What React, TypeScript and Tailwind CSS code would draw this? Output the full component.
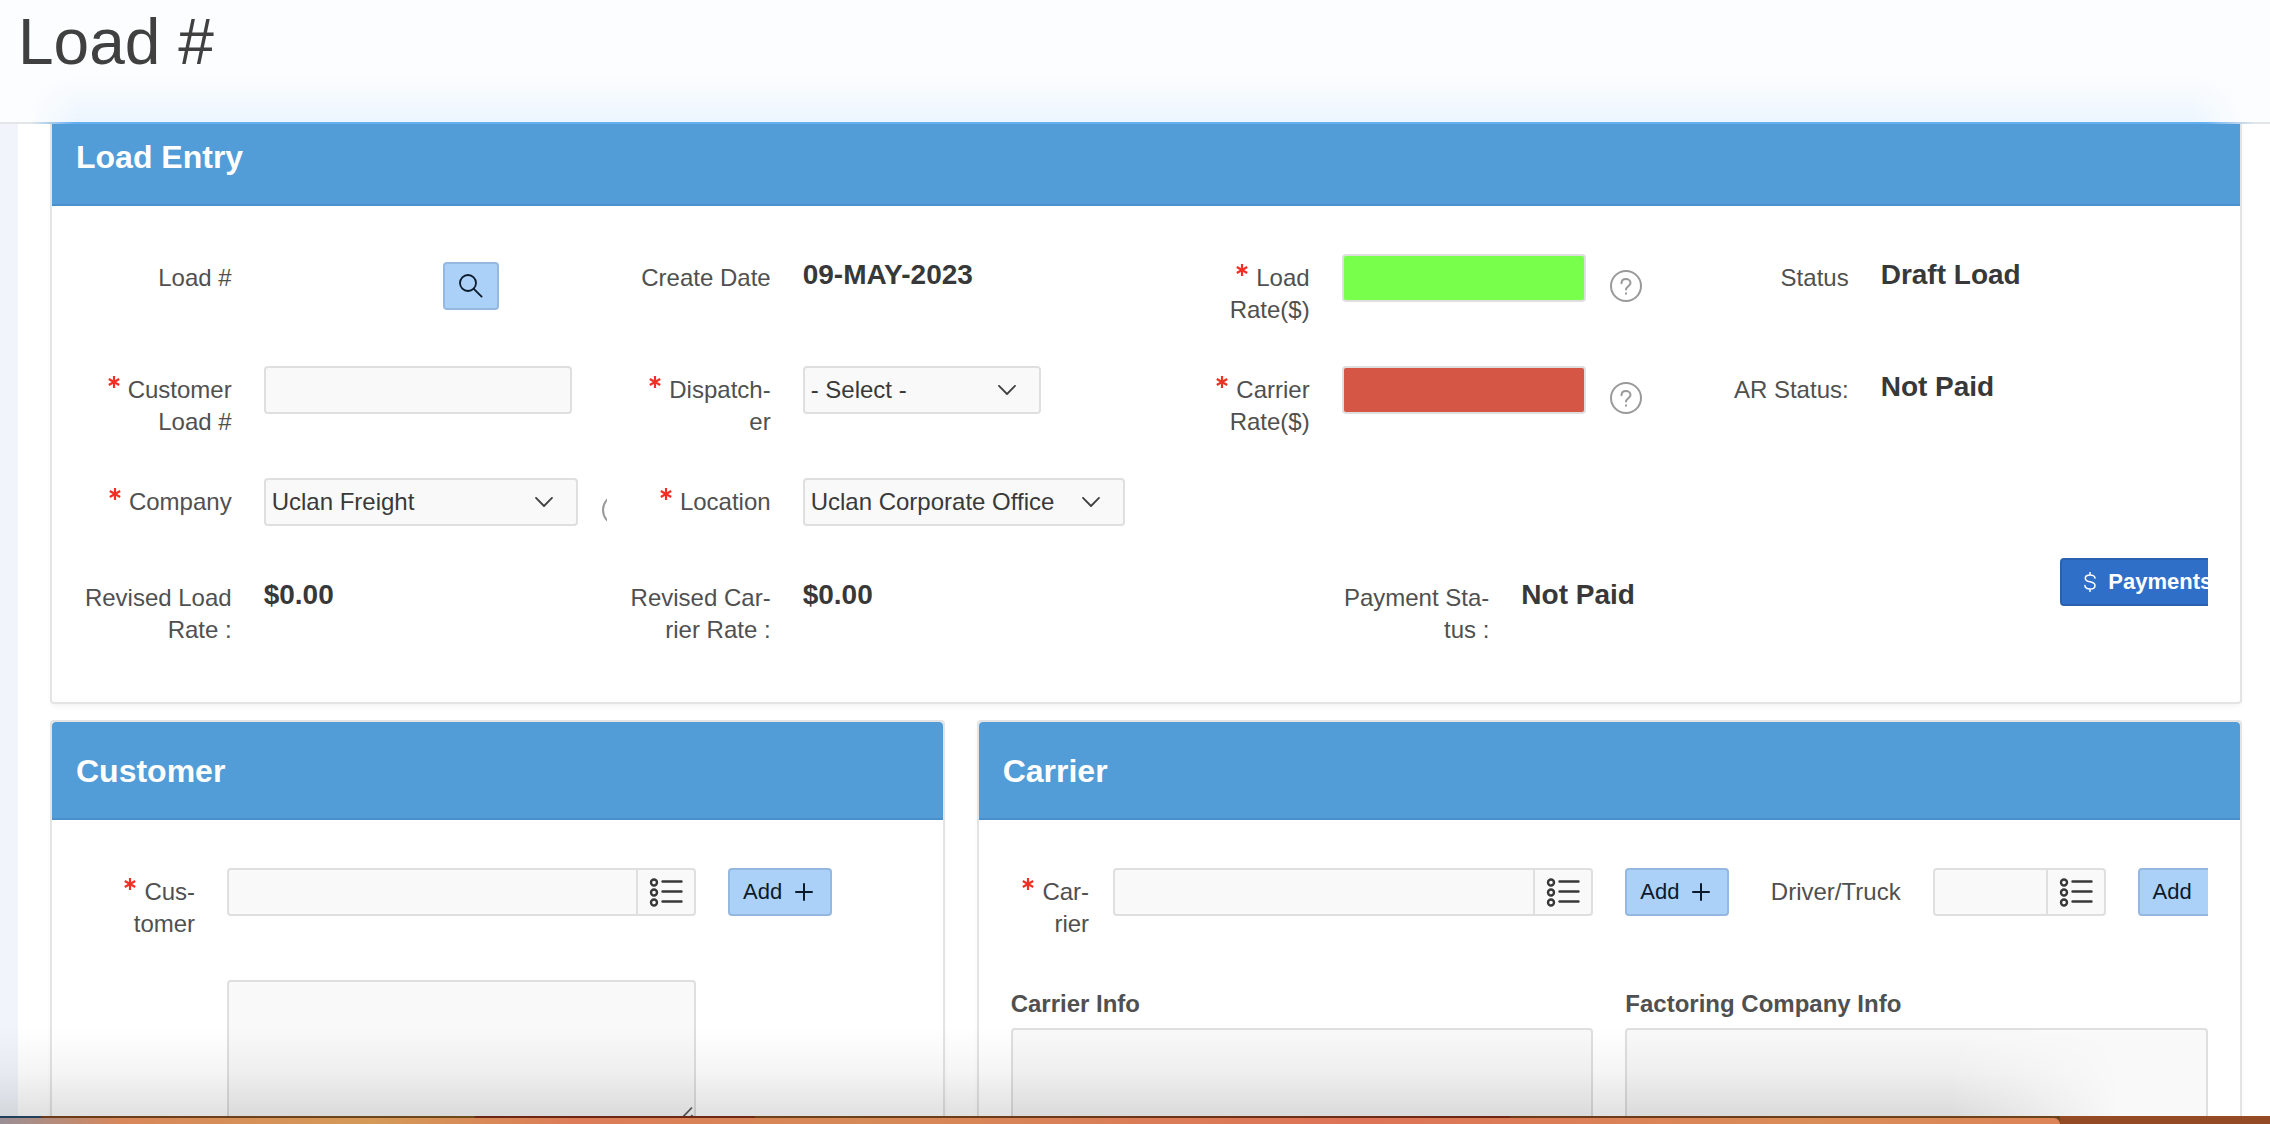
import type { ReactNode } from "react";

function Star() {
  return (
    <svg viewBox="0 0 12 12" className="mr-2 mb-2.5 inline-block size-3 align-baseline" aria-hidden="true">
      <path d="M6 0V12M0.8 3L11.2 9M11.2 3L0.8 9" stroke="#ee3124" strokeWidth="2.2" fill="none" />
    </svg>
  );
}

function Chevron() {
  return (
    <svg viewBox="0 0 18 10" className="pointer-events-none absolute top-[19px] right-[25px] h-[10px] w-[18px]" aria-hidden="true">
      <path d="M1 0.8L9 9L17 0.8" stroke="#404040" strokeWidth="1.8" fill="none" strokeLinecap="round" strokeLinejoin="round" />
    </svg>
  );
}

function ListIcon() {
  return (
    <svg viewBox="0 0 34 30" className="h-[30px] w-[34px]" fill="none" stroke="#383838" aria-hidden="true">
      <g strokeWidth="2.4">
        <circle cx="5" cy="5.5" r="3" />
        <circle cx="5" cy="15.5" r="3" />
        <circle cx="5" cy="25.5" r="3" />
      </g>
      <path d="M13.5 4.5H32.5M13.5 14.5H32.5M13.5 24.5H32.5" strokeWidth="2.4" strokeLinecap="round" />
    </svg>
  );
}

function PlusIcon() {
  return (
    <svg viewBox="0 0 18 18" className="size-[18px]" stroke="#0b1a2b" strokeWidth="2" aria-hidden="true">
      <path d="M9 1V17M1 9H17" strokeLinecap="round" />
    </svg>
  );
}

function HelpButton({ label }: { label: string }) {
  return (
    <button type="button" aria-label={label} className="mt-4 size-8 shrink-0">
      <svg viewBox="0 0 32 32" className="size-8" fill="none" stroke="#999999" strokeWidth="2" aria-hidden="true">
        <circle cx="16" cy="16" r="15" />
        <path d="M11.5 13.2C11.5 10.6 13.4 9 16 9S20.5 10.7 20.5 13C20.5 16 16 16.4 16 19.6" strokeLinecap="round" />
        <path d="M16 22.6V24.4" />
      </svg>
    </button>
  );
}

function FieldLabel({ id, required, className = "col-span-1 px-4", children }: { id: string; required?: boolean; className?: string; children: ReactNode }) {
  return (
    <div className={`${className} pt-2 text-right whitespace-nowrap`}>
      <label htmlFor={id} className="inline-block">
        {required && <Star />}
        {children}
      </label>
    </div>
  );
}

function Value({ id, className, children }: { id: string; className: string; children?: ReactNode }) {
  return (
    <div className={`${className} px-4 pt-[5px]`}>
      <output id={id} className="block text-[28px] leading-8 font-bold text-[#383838]">
        {children}
      </output>
    </div>
  );
}

function SelectBox({ id, width, text }: { id: string; width: string; text: string }) {
  return (
    <div className={`relative shrink-0 ${width}`}>
      <select id={id} className="h-12 w-full appearance-none rounded border-2 border-[#dfdfdf] bg-[#f9f9f9] pl-1.5 text-2xl leading-8 text-[#393939]">
        <option>{text}</option>
      </select>
      <Chevron />
    </div>
  );
}

function LovField({ id, label, className }: { id: string; label: string; className: string }) {
  return (
    <div className={`${className} px-4`}>
      <div className="flex h-12 overflow-hidden rounded border-2 border-[#dfdfdf] bg-[#f9f9f9]">
        <input id={id} type="text" className="min-w-0 flex-1 px-2" />
        <button type="button" aria-label={label} className="flex w-[58px] shrink-0 items-center justify-center border-l-2 border-[#dfdfdf]">
          <ListIcon />
        </button>
      </div>
    </div>
  );
}

function AddButton({ icon = true }: { icon?: boolean }) {
  return (
    <button type="button" className="flex h-12 w-[104px] shrink-0 items-center justify-between rounded border-2 border-[#94b8e0] bg-[#acd1f9] pr-[17px] pl-[13px] text-[22px] text-[#0b1a2b]">
      Add
      {icon && <PlusIcon />}
    </button>
  );
}

function Panel({ title, className = "", children }: { title: string; className?: string; children: ReactNode }) {
  return (
    <section className={`rounded border-2 border-[#e4e4e4] bg-white shadow-[0_4px_6px_-2px_rgba(0,0,0,0.06)] ${className}`}>
      <h2 className="flex h-[98px] items-center rounded-t-sm border-b-2 border-[#4a90cc] bg-[#529cd7] px-6 pt-0.5 text-[32px] font-bold text-white">{title}</h2>
      <div className="px-4 pt-12">{children}</div>
    </section>
  );
}

export default function App() {
  return (
    <div className="relative flex h-screen flex-col overflow-hidden bg-white font-['Liberation_Sans',Arial,sans-serif] text-2xl leading-8 text-[#505050]">
      <header className="relative h-[124px] shrink-0 bg-[#fcfdfe] px-[18px] pt-1">
        <div className="absolute inset-x-7 bottom-0 h-12 bg-linear-to-b from-transparent to-[#ebf5fe] [mask-image:linear-gradient(to_right,transparent,black_50px,black_calc(100%-50px),transparent)]" />
        <div className="absolute inset-x-0 bottom-0 h-0.5 bg-[linear-gradient(to_right,#e3e6e9_30px,#62aff2_75px,#62aff2_calc(100%-65px),#e3e6e9_calc(100%-15px))]" />
        <h1 className="relative text-[64px] leading-[76px] text-[#404040]">Load #</h1>
      </header>

      <div className="flex min-h-0 flex-1 overflow-hidden">
        <div className="w-[18px] shrink-0 bg-[#f1f5fb]" />
        <main className="-mt-[18px] min-w-0 flex-1 pr-7 pl-8">
          <Panel title="Load Entry">
            <div className="grid min-h-28 grid-cols-12">
              <FieldLabel id="load-no">Load #</FieldLabel>
              <Value id="load-no" className="col-span-1" />
              <div className="px-4 pt-2">
                <button type="button" aria-label="Search loads" className="flex h-12 w-14 items-center justify-center rounded border-2 border-[#94b8e0] bg-[#acd1f9]">
                  <svg viewBox="0 0 24 24" className="size-6" fill="none" stroke="#0b1a2b" strokeWidth="1.8" strokeLinecap="round" aria-hidden="true">
                    <circle cx="9" cy="9" r="8" />
                    <path d="M14.8 14.8L22.6 22.6" />
                  </svg>
                </button>
              </div>
              <FieldLabel id="create-date">Create Date</FieldLabel>
              <Value id="create-date" className="col-span-2">09-MAY-2023</Value>
              <FieldLabel id="load-rate" required>Load<br />Rate($)</FieldLabel>
              <div className="col-span-2 flex items-start gap-6 pl-4">
                <input id="load-rate" type="text" className="h-12 w-[244px] rounded border-2 border-[#dfdfdf] bg-[#77ff4c] px-2" />
                <HelpButton label="Help for load rate" />
              </div>
              <FieldLabel id="status">Status</FieldLabel>
              <Value id="status" className="col-span-2">Draft Load</Value>
            </div>

            <div className="grid min-h-28 grid-cols-12">
              <FieldLabel id="customer-load" required>Customer<br />Load #</FieldLabel>
              <div className="col-span-2 pl-4">
                <input id="customer-load" type="text" className="h-12 w-[308px] rounded border-2 border-[#dfdfdf] bg-[#f9f9f9] px-2" />
              </div>
              <FieldLabel id="dispatcher" required>Dispatch-<br />er</FieldLabel>
              <div className="col-span-2 pl-4">
                <SelectBox id="dispatcher" width="w-[238px]" text="- Select -" />
              </div>
              <FieldLabel id="carrier-rate" required>Carrier<br />Rate($)</FieldLabel>
              <div className="col-span-2 flex items-start gap-6 pl-4">
                <input id="carrier-rate" type="text" className="h-12 w-[244px] rounded border-2 border-[#dfdfdf] bg-[#d55645] px-2" />
                <HelpButton label="Help for carrier rate" />
              </div>
              <FieldLabel id="ar-status">AR Status:</FieldLabel>
              <Value id="ar-status" className="col-span-2">Not Paid</Value>
            </div>

            <div className="grid min-h-20 grid-cols-12">
              <FieldLabel id="company" required>Company</FieldLabel>
              <div className="col-span-2 flex items-start gap-6 overflow-hidden pl-4">
                <SelectBox id="company" width="w-[314px]" text="Uclan Freight" />
                <HelpButton label="Help for company" />
              </div>
              <FieldLabel id="location" required>Location</FieldLabel>
              <div className="col-span-2 pl-4">
                <SelectBox id="location" width="w-[322px]" text="Uclan Corporate Office" />
              </div>
            </div>

            <div className="grid min-h-36 grid-cols-12">
              <div className="col-span-11 grid grid-cols-11 pt-4">
                <FieldLabel id="revised-load">Revised Load<br />Rate :</FieldLabel>
                <Value id="revised-load" className="col-span-2">$0.00</Value>
                <FieldLabel id="revised-carrier">Revised Car-<br />rier Rate :</FieldLabel>
                <Value id="revised-carrier" className="col-span-3">$0.00</Value>
                <FieldLabel id="payment-status">Payment Sta-<br />tus :</FieldLabel>
                <Value id="payment-status" className="col-span-3">Not Paid</Value>
              </div>
              <div className="mx-4 overflow-hidden">
                <button type="button" className="flex h-12 w-max items-center gap-2.5 rounded border-2 border-[#2a62b0] bg-[#2f6fc7] px-5 text-[22px] font-bold text-white">
                  <svg viewBox="0 0 12 20" className="mx-0.5 h-5 w-3" fill="none" stroke="white" strokeWidth="1.5" strokeLinecap="round" aria-hidden="true">
                    <path d="M6 0.6V3M6 17V19.4M11 6C10.6 4 8.6 3 6 3C3.2 3 1.3 4.3 1.3 6.4C1.3 11 11 8.6 11 13.4C11 15.6 9 17 6 17C3.2 17 1.2 15.8 0.9 13.6" />
                  </svg>
                  Payments
                </button>
              </div>
            </div>
          </Panel>

          <div className="mt-4 grid grid-cols-12 gap-8">
            <Panel title="Customer" className="col-span-5">
              <div className="grid min-h-28 grid-cols-12">
                <FieldLabel id="customer" required className="col-span-2 px-4">Cus-<br />tomer</FieldLabel>
                <LovField id="customer" label="Choose customer" className="col-span-7" />
                <div className="col-span-3 pl-4"><AddButton /></div>
              </div>
              <div className="grid grid-cols-12">
                <div className="relative col-span-7 col-start-3 px-4">
                  <textarea aria-label="Customer details" className="block h-36 w-full resize-none rounded border-2 border-[#dfdfdf] bg-[#f9f9f9] p-2" />
                  <svg viewBox="0 0 16 16" className="pointer-events-none absolute right-[18px] bottom-[2px] size-4" stroke="#5c5c5c" strokeWidth="1.8" aria-hidden="true">
                    <path d="M1 15L14 1.5M9 15L14.5 9" />
                  </svg>
                </div>
              </div>
            </Panel>

            <Panel title="Carrier" className="col-span-7">
              <div className="grid min-h-28 grid-cols-12">
                <FieldLabel id="carrier" required className="col-span-1 pr-2">Car-<br />rier</FieldLabel>
                <LovField id="carrier" label="Choose carrier" className="col-span-5" />
                <div className="col-span-1 flex items-start pl-4"><AddButton /></div>
                <FieldLabel id="driver" className="col-span-2 px-4">Driver/Truck</FieldLabel>
                <LovField id="driver" label="Choose driver or truck" className="col-span-2" />
                <div className="mx-4 overflow-hidden"><AddButton icon={false} /></div>
              </div>
              <div className="grid grid-cols-2">
                <div className="px-4 pt-2">
                  <label htmlFor="carrier-info" className="mb-2 block font-bold">Carrier Info</label>
                  <textarea id="carrier-info" className="block h-36 w-full resize rounded border-2 border-[#dfdfdf] bg-[#f9f9f9] p-2" />
                </div>
                <div className="px-4 pt-2">
                  <label htmlFor="factoring-info" className="mb-2 block font-bold">Factoring Company Info</label>
                  <textarea id="factoring-info" className="block h-36 w-full resize rounded border-2 border-[#dfdfdf] bg-[#f9f9f9] p-2" />
                </div>
              </div>
            </Panel>
          </div>
        </main>
      </div>

      <div className="pointer-events-none absolute inset-x-0 bottom-2 h-[88px] bg-linear-to-b from-transparent via-black/4 to-black/12 [mask-image:linear-gradient(to_right,black_calc(100%-320px),transparent_calc(100%-150px))]" />
      <footer className="relative h-2 shrink-0 bg-[#944a24]">
        <div className="mr-[210px] h-full bg-[linear-gradient(to_right,#1f4058_40px,#6b3a1a_42px,#6b4a1c_474px,#6b2515_476px,#6b2a16_754px,#6b431a_756px,#6b3a1a_50%,#6b2515_1508px,#6b3a1a_1512px,#6b431a)] pt-0.5">
          <div className="h-1.5 rounded-tr-lg bg-[linear-gradient(to_right,#9a8f96,#d8875a_6%,#d49a58_18%,#dc7c58_28%,#d68a58_42%,#dd7357_66%,#d98d58_88%,#dc8458)]" />
        </div>
      </footer>
    </div>
  );
}
